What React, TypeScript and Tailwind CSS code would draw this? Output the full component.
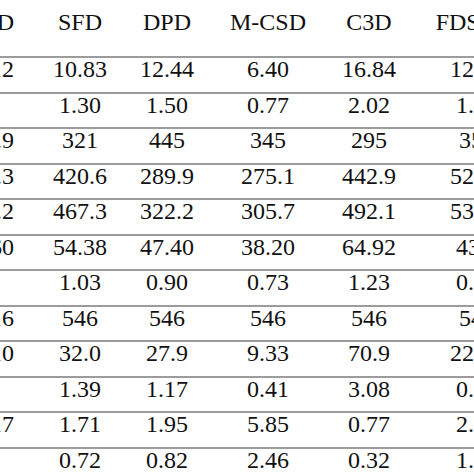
import React from 'react'

const header = ['CSD', 'SFD', 'DPD', 'M-CSD', 'C3D', 'FDS-SD']

const rows = [
  ['13.12', '10.83', '12.44', '6.40', '16.84', '12.93'],
  ['', '1.30', '1.50', '0.77', '2.02', '1.47'],
  ['3.9', '321', '445', '345', '295', '351'],
  ['441.3', '420.6', '289.9', '275.1', '442.9', '521.4'],
  ['489.2', '467.3', '322.2', '305.7', '492.1', '536.8'],
  ['61.60', '54.38', '47.40', '38.20', '64.92', '43.5'],
  ['', '1.03', '0.90', '0.73', '1.23', '0.86'],
  ['516', '546', '546', '546', '546', '546'],
  ['41.10', '32.0', '27.9', '9.33', '70.9', '22.63'],
  ['', '1.39', '1.17', '0.41', '3.08', '0.52'],
  ['1.17', '1.71', '1.95', '5.85', '0.77', '2.14'],
  ['', '0.72', '0.82', '2.46', '0.32', '1.25'],
]

const cols = 'grid grid-cols-[90px_100px_74px_128px_74px_142px]'

function Cell({ value, first }: { value: string; first: boolean }) {
  return (
    <div className={first ? 'text-right pr-[16px] whitespace-nowrap' : 'text-center whitespace-nowrap'}>
      {value}
    </div>
  )
}

export default function App() {
  return (
    <div className="w-[474px] h-[474px] overflow-hidden bg-white">
      <div
        className="-ml-[60px] w-[608px] text-[24px] leading-[22px] text-[#111]"
        style={{ fontFamily: '"Liberation Serif", "Times New Roman", serif' }}
      >
        <div className={`${cols} h-[56px] pt-[11px]`}>
          {header.map((h, i) => (
            <Cell key={i} value={h} first={i === 0} />
          ))}
        </div>
        {rows.map((r, ri) => (
          <div key={ri} className={`${cols} h-[35.55px] border-t-2 border-[#9c9c9c]`}>
            {r.map((v, ci) => (
              <Cell key={ci} value={v} first={ci === 0} />
            ))}
          </div>
        ))}
      </div>
    </div>
  )
}
